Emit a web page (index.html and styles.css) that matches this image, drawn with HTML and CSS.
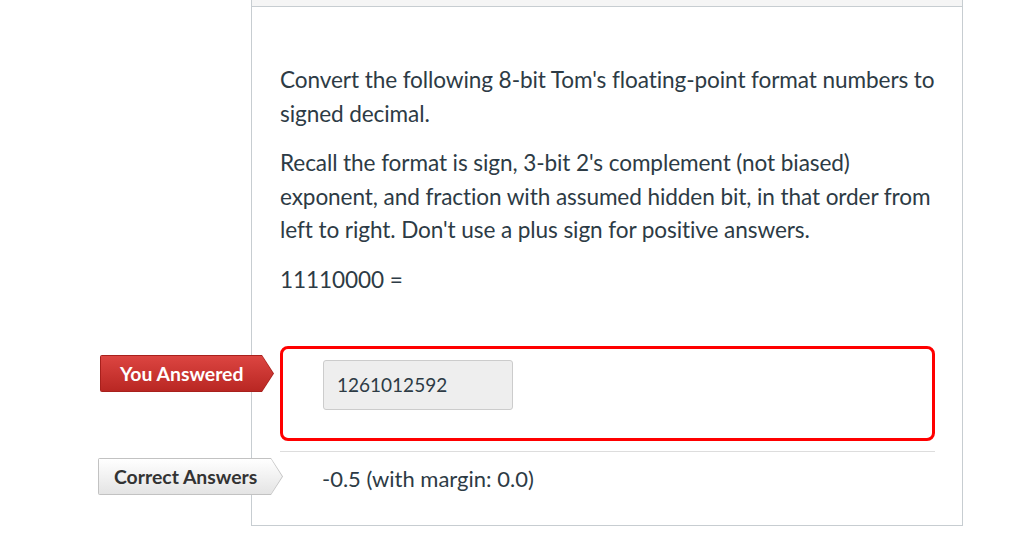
FILE: index.html
```html
<!DOCTYPE html>
<html>
<head>
<meta charset="utf-8">
<link rel="stylesheet" href="styles.css">
</head>
<body>
<div class="panel">
  <div class="panel-head"></div>
  <div class="question">
    <p>Convert the following 8-bit Tom's floating-point format numbers to signed decimal.</p>
    <p>Recall the format is sign, 3-bit 2's complement (not biased) exponent, and fraction with assumed hidden bit, in that order from left to right. Don't use a plus sign for positive answers.</p>
    <p>11110000 =</p>
  </div>
  <div class="answers">
    <div class="answer wrong">
      <div class="tag tag-red"><span class="tag-inner">You Answered</span></div>
      <div class="input-box">1261012592</div>
    </div>
    <div class="answer correct">
      <div class="tag tag-gray"><span class="tag-inner">Correct Answers</span></div>
      <span class="correct-text">-0.5 (with margin: 0.0)</span>
    </div>
  </div>
</div>
</body>
</html>
```

FILE: styles.css
```css
html, body {
  margin: 0;
  padding: 0;
  background: #ffffff;
}

body {
  font-family: Lato, "Open Sans", sans-serif;
  color: #2d3b45;
}

.panel {
  margin-left: 251px;
  width: 710px;
  border: 1px solid #c7cdd1;
  border-top: none;
  padding-bottom: 17px;
}

.panel-head {
  height: 6px;
  background: #f5f5f5;
  border-bottom: 1px solid #c7cdd1;
}

.question {
  padding: 56px 12px 0 28px;
}

.question p {
  margin: 0 0 16px;
  font-size: 22.6px;
  line-height: 33.5px;
  letter-spacing: -0.1px;
}

.answers {
  padding: 0 27px 0 28px;
  margin-top: 50px;
}

.answer {
  position: relative;
}

.wrong {
  border: 3px solid #ff0000;
  border-radius: 8px;
  padding: 11px 40px 28px;
  height: 50px;
}

.input-box {
  box-sizing: border-box;
  width: 190px;
  height: 50px;
  background: #eeeeee;
  border: 1px solid #cccccc;
  border-radius: 3px;
  padding: 0 13px;
  font-size: 19px;
  line-height: 48px;
  color: #2d3b45;
}

.correct {
  margin-top: 10px;
  border-top: 1px solid #dddddd;
  padding: 13px 42px 15px;
  height: 28px;
}

.correct-text {
  font-size: 22px;
  line-height: 28px;
}

.tag {
  position: absolute;
  box-sizing: border-box;
  clip-path: polygon(0 0, calc(100% - 12px) 0, 100% 50%, calc(100% - 12px) 100%, 0 100%);
  border-radius: 2px;
  padding: 1px;
}

.tag-inner {
  display: block;
  height: 100%;
  box-sizing: border-box;
  clip-path: polygon(0 0, calc(100% - 11px) 0, 100% 50%, calc(100% - 11px) 100%, 0 100%);
  font-weight: bold;
  font-size: 19.4px;
  text-align: left;
}

.tag-red {
  left: -183px;
  top: 6px;
  width: 174px;
  height: 37px;
  background: #a8201c;
}

.tag-red .tag-inner {
  background: linear-gradient(#dc4541, #b92723);
  color: #ffffff;
  line-height: 35px;
  padding-left: 19px;
}

.tag-gray {
  left: -182px;
  top: 6px;
  width: 185px;
  height: 37px;
  background: #c2c2c2;
}

.tag-gray .tag-inner {
  background: linear-gradient(#ffffff, #e4e4e4);
  color: #333333;
  line-height: 35px;
  padding-left: 15px;
}
```
